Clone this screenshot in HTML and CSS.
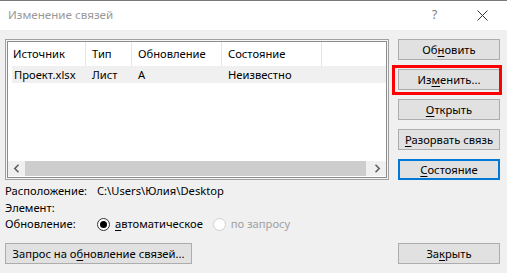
FILE: index.html
```html
<!DOCTYPE html>
<html lang="ru">
<head>
    <meta charset="UTF-8">
    <title>Изменение связей</title>
    <link rel="stylesheet" href="styles.css">
</head>
<body>
    <div class="dialog">
        <div class="titlebar">
            <span class="title">Изменение связей</span>
            <span class="help">?</span>
            <svg class="close" width="11" height="11" viewBox="0 0 11 11">
                <path d="M0.5 0.5 L10.5 10.5 M10.5 0.5 L0.5 10.5" stroke="#333" stroke-width="1" fill="none"/>
            </svg>
        </div>

        <div class="content">
            <div class="main">
                <div class="listbox">
                    <div class="list-inner">
                        <div class="list-header">
                            <div class="col c1">Источник</div>
                            <div class="col c2">Тип</div>
                            <div class="col c3">Обновление</div>
                            <div class="col c4">Состояние</div>
                        </div>
                        <div class="list-row">
                            <div class="col c1">Проект.xlsx</div>
                            <div class="col c2">Лист</div>
                            <div class="col c3">А</div>
                            <div class="col c4">Неизвестно</div>
                        </div>
                        <div class="list-space"></div>
                        <div class="hscroll">
                            <span class="arrow">
                                <svg width="7" height="9" viewBox="0 0 7 9"><path d="M5.5 0.8 L1.8 4.5 L5.5 8.2" stroke="#606060" stroke-width="1.6" fill="none"/></svg>
                            </span>
                            <span class="thumb"></span>
                            <span class="arrow">
                                <svg width="7" height="9" viewBox="0 0 7 9"><path d="M1.5 0.8 L5.2 4.5 L1.5 8.2" stroke="#606060" stroke-width="1.6" fill="none"/></svg>
                            </span>
                        </div>
                    </div>
                </div>

                <div class="side-buttons">
                    <button class="btn">Об<u>н</u>овить</button>
                    <button class="btn marked">Из<u>м</u>енить...</button>
                    <button class="btn"><u>О</u>ткрыть</button>
                    <button class="btn"><u>Р</u>азорвать связь</button>
                    <button class="btn default"><u>С</u>остояние</button>
                </div>
            </div>

            <div class="info">
                <span class="label">Расположение:</span>
                <span class="value">C:\Users\Юлия\Desktop</span>
                <span class="label">Элемент:</span>
                <span class="value"></span>
                <span class="label">Обновление:</span>
                <span class="value radios">
                    <span class="radio checked"></span>
                    <span class="radio-text"><u>а</u>втоматическое</span>
                    <span class="radio disabled"></span>
                    <span class="radio-text disabled">по запросу</span>
                </span>
            </div>

            <div class="bottom">
                <button class="btn wide">Запрос на о<u>б</u>новление связей...</button>
                <button class="btn">За<u>к</u>рыть</button>
            </div>
        </div>
    </div>
</body>
</html>
```

FILE: styles.css
```css
body {
    margin: 0;
    background: #f0f0f0;
    font-family: 'Segoe UI', 'Noto Sans', Arial, sans-serif;
    font-size: 11.2px;
    color: #000;
}
u {
    text-decoration-thickness: 1px;
    text-underline-offset: 2px;
}
.dialog {
    width: 507px;
    height: 273px;
    overflow: hidden;
    border-top: 1px solid #7a7a7a;
    box-sizing: border-box;
}
.titlebar {
    height: 29px;
    background: #fff;
    display: flex;
    align-items: center;
    padding-left: 8px;
}
.title {
    color: #999;
    flex: 1;
    font-size: 11.6px;
    padding-bottom: 2px;
}
.help {
    color: #777;
    font-size: 12px;
    width: 45px;
    padding-bottom: 2px;
}
.close {
    margin-right: 19px;
    margin-bottom: 1px;
}
.content {
    padding: 9px 7px 0 5px;
}
.main {
    display: flex;
    gap: 9px;
}
.listbox {
    width: 384px;
    height: 141px;
    box-sizing: border-box;
    border: 1px solid #a0a0a0;
    padding: 1px;
    background: #f6f6f6;
}
.list-inner {
    height: 100%;
    box-sizing: border-box;
    border: 1px solid #8c8c8c;
    background: #fff;
    display: flex;
    flex-direction: column;
}
.col {
    box-sizing: border-box;
    white-space: nowrap;
}
.list-header {
    display: flex;
    height: 24px;
}
.list-header .col {
    border-right: 1px solid #e5e5e5;
    line-height: 24px;
    padding-left: 6px;
}
.list-header .c1 { width: 78px; padding-left: 5px; }
.list-header .c2 { width: 46px; }
.list-header .c3 { width: 90px; }
.list-header .c4 { width: 100px; }
.list-row {
    display: flex;
    height: 17px;
    line-height: 17px;
    background: #f0f0f0;
    margin-left: 4px;
}
.list-row .col {
    padding-left: 2px;
}
.list-row .c1 { width: 78px; }
.list-row .c2 { width: 46px; }
.list-row .c3 { width: 90px; }
.list-row .c4 { width: 100px; }
.list-space {
    flex: 1;
}
.hscroll {
    height: 15px;
    display: flex;
    align-items: stretch;
    background: #f0f0f0;
    margin-bottom: 1px;
}
.arrow {
    width: 17px;
    display: flex;
    align-items: center;
    justify-content: center;
}
.thumb {
    flex: 1;
    background: #cdcdcd;
    margin-right: 3px;
}
.side-buttons {
    display: flex;
    flex-direction: column;
    gap: 9px;
}
.btn {
    width: 102px;
    height: 21px;
    box-sizing: border-box;
    border: 1px solid #adadad;
    background: #e1e1e1;
    font: inherit;
    color: #000;
    padding: 0;
    line-height: 18px;
}
.btn.default {
    border: 2px solid #0078d7;
}
/* red annotation frame around the button */
.btn.marked {
    position: relative;
}
.btn.marked::after {
    content: "";
    position: absolute;
    left: -7px;
    top: -5px;
    right: -3px;
    bottom: -6px;
    border: 3px solid #ff0000;
}
.info {
    display: grid;
    grid-template-columns: 92px 1fr;
    grid-template-rows: 17px 16px 16px;
    margin-top: 3px;
    line-height: 16px;
}
.radios {
    display: flex;
    align-items: center;
}
.radio {
    width: 13px;
    height: 13px;
    box-sizing: border-box;
    border-radius: 50%;
    border: 1px solid #333;
    background: #fff;
    margin-right: 5px;
    position: relative;
}
.radio.checked::after {
    content: "";
    position: absolute;
    left: 2px;
    top: 2px;
    width: 7px;
    height: 7px;
    border-radius: 50%;
    background: #000;
}
.radio.disabled {
    border-color: #d0d0d0;
    margin-left: 10px;
}
.radio-text.disabled {
    color: #a0a0a0;
}
.bottom {
    display: flex;
    justify-content: space-between;
    margin-top: 11px;
}
.btn.wide {
    width: 187px;
}
```
